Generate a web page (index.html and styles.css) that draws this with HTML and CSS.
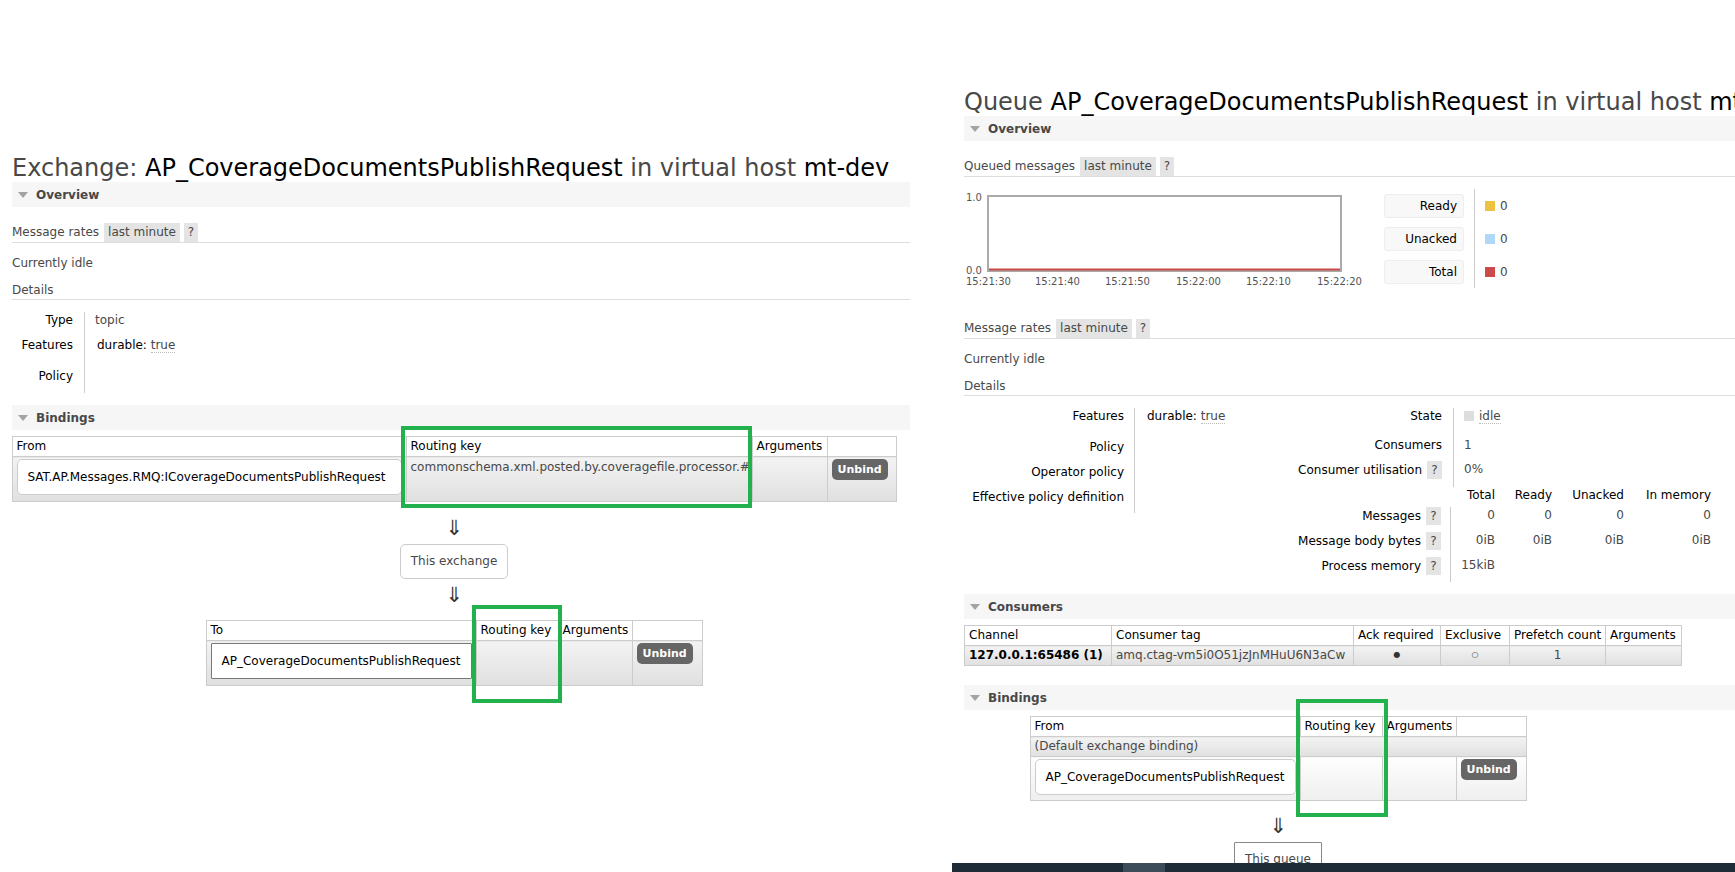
FILE: index.html
```html
<!DOCTYPE html>
<html>
<head>
<meta charset="utf-8">
<title>RabbitMQ bindings</title>
<link rel="stylesheet" href="styles.css">
</head>
<body>
<div class="page">
  <section class="panel left">
    <h1><span>Exchange: </span><b>AP_CoverageDocumentsPublishRequest</b><span> in virtual host </span><b>mt-dev</b></h1>
    <div class="bar"><span class="tri"></span>Overview</div>
    <div class="rate-row">Message rates<span class="chip">last minute</span><span class="chip q">?</span></div>
    <div class="idle">Currently idle</div>
    <div class="details">Details</div>
    <div class="facts ex-facts">
      <div class="fr h25"><div class="fl">Type</div><div class="fv">topic</div></div>
      <div class="fr h31"><div class="fl">Features</div><div class="fv"><span class="dk">durable:</span> <span class="abbr">true</span></div></div>
      <div class="fr h25"><div class="fl">Policy</div><div class="fv"></div></div>
    </div>
    <div class="bar mt12"><span class="tri"></span>Bindings</div>
    <div class="bwrap lwrap">
      <table class="list t1">
        <colgroup><col style="width:394px"><col style="width:346px"><col style="width:75px"><col style="width:69px"></colgroup>
        <tr class="hd"><th>From</th><th>Routing key</th><th>Arguments</th><th></th></tr>
        <tr class="bd"><td><span class="objbox">SAT.AP.Messages.RMQ:ICoverageDocumentsPublishRequest</span></td><td>commonschema.xml.posted.by.coveragefile.processor.#</td><td></td><td><span class="btn">Unbind</span></td></tr>
      </table>
      <div class="arrow">⇓</div>
      <div class="node">This exchange</div>
      <div class="arrow">⇓</div>
      <table class="list t2">
        <colgroup><col style="width:270px"><col style="width:82px"><col style="width:74px"><col style="width:70px"></colgroup>
        <tr class="hd"><th>To</th><th>Routing key</th><th>Arguments</th><th></th></tr>
        <tr class="bd"><td><span class="objbox dark">AP_CoverageDocumentsPublishRequest</span></td><td></td><td></td><td><span class="btn">Unbind</span></td></tr>
      </table>
      <div class="mark m1"></div>
      <div class="mark m2"></div>
    </div>
  </section>

  <section class="panel right">
    <div class="rcontent">
      <h1><span>Queue </span><b>AP_CoverageDocumentsPublishRequest</b><span> in virtual host </span><b>mt-dev</b></h1>
      <div class="bar"><span class="tri"></span>Overview</div>
      <div class="rate-row">Queued messages<span class="chip">last minute</span><span class="chip q">?</span></div>
      <div class="chart-row">
        <svg class="chart" width="412" height="100" viewBox="0 0 412 100">
          <rect x="24" y="7" width="353" height="75" fill="#fff" stroke="#aaa" stroke-width="2"/>
          <line x1="25" y1="80.5" x2="376" y2="80.5" stroke="#cb4b4b" stroke-width="2"/>
          <g font-family="DejaVu Sans, sans-serif" font-size="10" fill="#545454">
            <text x="2" y="12">1.0</text>
            <text x="2" y="85">0.0</text>
            <text x="2" y="95.5">15:21:30</text>
            <text x="71" y="95.5">15:21:40</text>
            <text x="141" y="95.5">15:21:50</text>
            <text x="212" y="95.5">15:22:00</text>
            <text x="282" y="95.5">15:22:10</text>
            <text x="353" y="95.5">15:22:20</text>
          </g>
        </svg>
        <div class="legend">
          <div class="lg-row"><div class="lg-l"><div class="lg-box">Ready</div></div><div class="lg-v"><span class="sw ready"></span>0</div></div>
          <div class="lg-row"><div class="lg-l"><div class="lg-box">Unacked</div></div><div class="lg-v"><span class="sw unacked"></span>0</div></div>
          <div class="lg-row"><div class="lg-l"><div class="lg-box">Total</div></div><div class="lg-v"><span class="sw total"></span>0</div></div>
        </div>
      </div>
      <div class="rate-row mt30">Message rates<span class="chip">last minute</span><span class="chip q">?</span></div>
      <div class="idle">Currently idle</div>
      <div class="details">Details</div>
      <div class="qdetails">
        <div class="facts qfacts">
          <div class="fr h31"><div class="fl">Features</div><div class="fv"><span class="dk">durable:</span> <span class="abbr">true</span></div></div>
          <div class="fr h25"><div class="fl">Policy</div><div class="fv"></div></div>
          <div class="fr h25"><div class="fl">Operator policy</div><div class="fv"></div></div>
          <div class="fr h24"><div class="fl">Effective policy definition</div><div class="fv"></div></div>
        </div>
        <div class="rblock">
          <div class="facts sfacts">
            <div class="fr h29"><div class="fl">State</div><div class="fv"><span class="state"></span><span class="abbr">idle</span></div></div>
            <div class="fr h24"><div class="fl">Consumers</div><div class="fv">1</div></div>
            <div class="fr h26"><div class="fl">Consumer utilisation<span class="help">?</span></div><div class="fv">0%</div></div>
          </div>
          <div class="stats">
            <div class="sr hdr"><div class="sl"></div><div class="c1">Total</div><div class="c2">Ready</div><div class="c3">Unacked</div><div class="c4">In memory</div><div class="c5">Persistent</div></div>
            <div class="sr"><div class="sl">Messages<span class="help">?</span></div><div class="c1">0</div><div class="c2">0</div><div class="c3">0</div><div class="c4">0</div><div class="c5">0</div></div>
            <div class="sr"><div class="sl">Message body bytes<span class="help">?</span></div><div class="c1">0iB</div><div class="c2">0iB</div><div class="c3">0iB</div><div class="c4">0iB</div><div class="c5">0iB</div></div>
            <div class="sr"><div class="sl">Process memory<span class="help">?</span></div><div class="c1">15kiB</div><div class="c2"></div><div class="c3"></div><div class="c4"></div><div class="c5"></div></div>
          </div>
        </div>
      </div>
      <div class="bar mt12"><span class="tri"></span>Consumers</div>
      <table class="list t3">
        <colgroup><col style="width:147px"><col style="width:242px"><col style="width:87px"><col style="width:69px"><col style="width:96px"><col style="width:76px"></colgroup>
        <tr class="hd"><th>Channel</th><th>Consumer tag</th><th>Ack required</th><th>Exclusive</th><th>Prefetch count</th><th>Arguments</th></tr>
        <tr class="bd sm"><td class="ch">127.0.0.1:65486 (1)</td><td>amq.ctag-vm5i0O51jzJnMHuU6N3aCw</td><td class="ctr dot">●</td><td class="ctr dot">○</td><td class="ctr">1</td><td></td></tr>
      </table>
      <div class="bar mt19"><span class="tri"></span>Bindings</div>
      <div class="bwrap rwrap">
        <table class="list t4">
          <colgroup><col style="width:270px"><col style="width:82px"><col style="width:74px"><col style="width:70px"></colgroup>
          <tr class="hd"><th>From</th><th>Routing key</th><th>Arguments</th><th></th></tr>
          <tr class="bd sm"><td colspan="4" class="dflt">(Default exchange binding)</td></tr>
          <tr class="bd alt"><td><span class="objbox">AP_CoverageDocumentsPublishRequest</span></td><td></td><td></td><td><span class="btn">Unbind</span></td></tr>
        </table>
        <div class="arrow">⇓</div>
        <div class="node qnode">This queue</div>
        <div class="mark m3"></div>
      </div>
    </div>
    <div class="hscroll"><div class="thumb"></div></div>
  </section>
</div>
</body>
</html>
```
FILE: styles.css
```css
* { box-sizing: border-box; }
html, body { margin: 0; padding: 0; }
body {
  font-family: "DejaVu Sans", Verdana, sans-serif;
  font-size: 12px;
  color: #484848;
  background: #fff;
  width: 1735px;
  height: 872px;
  overflow: hidden;
}
.page { display: flex; height: 872px; }
.panel { flex: none; height: 872px; }
.left { width: 952px; padding: 155px 0 0 12px; }
.left > * { width: 898px; }
.right { width: 783px; display: flex; flex-direction: column; overflow: hidden; }
.rcontent { height: 863px; overflow: hidden; padding: 89px 0 0 12px; width: 783px; }
.rcontent > * { width: 900px; }

h1 {
  font-size: 24px;
  line-height: 27px;
  font-weight: normal;
  margin: 0;
  white-space: nowrap;
  color: #484848;
}
h1 b { font-weight: normal; color: #000; }

.bar {
  height: 25px;
  background: #f6f6f6;
  display: flex;
  align-items: center;
  padding-left: 6px;
  font-weight: bold;
  color: #484848;
  line-height: 16px;
}
.tri {
  width: 0; height: 0;
  border-left: 5.5px solid transparent;
  border-right: 5.5px solid transparent;
  border-top: 6px solid #a3a3a3;
  margin-right: 8px;
}
.mt12 { margin-top: 12px; }
.mt19 { margin-top: 19px; }
.mt30 { margin-top: 30px !important; }

.rate-row {
  margin-top: 16px;
  height: 20px;
  line-height: 19px;
  border-bottom: 1px solid #ddd;
  display: flex;
  align-items: flex-start;
  white-space: nowrap;
}
.chip {
  display: inline-block;
  height: 19px;
  background: #e4e4e4;
  padding: 0 4px;
  margin-left: 5px;
}
.chip.q { width: 14px; padding: 0; text-align: center; margin-left: 4px; }

.idle { margin-top: 10px; line-height: 20px; height: 20px; }
.details {
  margin-top: 7px;
  height: 20px;
  line-height: 20px;
  border-bottom: 1px solid #ddd;
}

.facts { margin-top: 12px; }
.fr { display: flex; line-height: 16px; white-space: nowrap; }
.h24 { height: 24px; } .h25 { height: 25px; } .h26 { height: 26px; }
.h29 { height: 29px; } .h31 { height: 31px; }
.fl {
  flex: none;
  text-align: right;
  color: #000;
  border-right: 1px solid #ccc;
}
.fv { padding-left: 10px; }
.ex-facts .fl { width: 73px; padding-right: 11px; }
.qfacts .fl { width: 171px; padding-right: 10px; }
.dk { color: #000; margin-left: 2px; }
.abbr { border-bottom: 1px dotted #bbb; }

.bwrap { position: relative; display: flex; flex-direction: column; align-items: center; margin-top: 6px; }
.lwrap { width: 884px !important; }
.rwrap { width: 628px !important; }

table.list { border-collapse: collapse; table-layout: fixed; }
table.list th, table.list td {
  border: 1px solid #ccc;
  padding: 0 4px;
  text-align: left;
  vertical-align: top;
  white-space: nowrap;
  overflow: hidden;
}
table.list th { font-weight: normal; color: #000; line-height: 18px; background: #fff; }
table.list tr.hd { height: 20px; }
table.list tr.bd { height: 45px; }
table.list tr.bd td {
  padding-top: 2px;
  line-height: 16px;
  background: linear-gradient(#f3f3f3, #e0e0e0);
}
table.list tr.bd.sm { height: 20px; }
table.list tr.bd.sm td { padding-top: 0; line-height: 18px; }
table.list tr.bd.alt { height: 44px; }
table.list tr.bd.alt td { background: linear-gradient(#fefefe, #efefef); }
.t1 { width: 884px; }
.t2 { width: 496px; }
.t3 { width: 717px; margin-top: 6px; }
.t4 { width: 496px; }
td.ch { font-weight: bold; color: #000; }
td.ctr { text-align: center !important; }
td.dot { font-size: 8px; color: #333; }

.objbox {
  display: block;
  border: 1px solid #ccc;
  border-radius: 5px;
  background: #fff;
  padding: 9px 10px;
  line-height: 16px;
  color: #000;
  white-space: nowrap;
  overflow: hidden;
}
.objbox.dark { border-color: #777; border-radius: 1px; }

.btn {
  display: inline-block;
  background: #666;
  color: #fff;
  font-weight: bold;
  font-size: 11px;
  line-height: 21px;
  padding: 0 6px;
  border-radius: 5px;
}

.arrow {
  height: 32px;
  line-height: 32px;
  font-size: 21px;
  text-align: center;
  color: #333;
  margin-top: 10px;
}
.arrow + .node + .arrow { margin-top: 0; margin-bottom: 9px; }
.rwrap .arrow { margin-top: 9px; }
.node {
  border: 1px solid #ccc;
  border-radius: 5px;
  padding: 9px 10px;
  line-height: 15px;
  background: #fff;
}
.qnode { border-color: #888; border-radius: 1px; }

.mark { position: absolute; border: 4px solid #22b14c; }
.m1 { left: 389px; top: -10px; width: 351px; height: 82px; }
.m2 { left: 460px; top: 169px; width: 90px; height: 98px; }
.m3 { left: 332px; top: -17px; width: 92px; height: 118px; }

.chart-row { display: flex; margin-top: 12px; height: 100px; }
.chart { display: block; flex: none; }
.legend { margin-left: 8px; }
.lg-row { display: flex; height: 33px; }
.lg-l { width: 91px; padding: 5px 10px 0 0; border-right: 1px solid #ccc; }
.lg-box {
  height: 24px;
  background: #f8f8f8;
  border: 1px solid #eee;
  border-radius: 3px;
  text-align: right;
  padding-right: 6px;
  line-height: 22px;
  color: #000;
}
.lg-v { padding: 5px 0 0 10px; display: flex; align-items: center; height: 29px; }
.sw { width: 10px; height: 10px; margin-right: 5px; }
.sw.ready { background: #edc240; }
.sw.unacked { background: #afd8f8; }
.sw.total { background: #cb4b4b; }

.qdetails { display: flex; margin-top: 12px; height: 174px; }
.qdetails .facts { margin-top: 0; }
.qfacts { width: 316px; flex: none; }
.rblock { flex: none; }
.sfacts .fl { width: 174px; padding-right: 11px; }
.state { display: inline-block; width: 10px; height: 10px; background: #ddd; margin-right: 5px; vertical-align: -1px; }
.help {
  display: inline-block;
  width: 15px;
  height: 18px;
  line-height: 18px;
  text-align: center;
  background: #e4e4e4;
  margin-left: 5px;
  vertical-align: middle;
  color: #484848;
}
.stats { white-space: nowrap; }
.sr { display: flex; height: 25px; line-height: 16px; }
.sr.hdr { height: 20px; color: #000; }
.sl { width: 171px; flex: none; text-align: right; padding-right: 9px; border-right: 1px solid #ccc; color: #000; }
.sr.hdr .sl { border-right-color: transparent; }
.sr > div:not(.sl) { flex: none; text-align: right; padding-right: 5px; }
.c1 { width: 49px; } .c2 { width: 57px; } .c3 { width: 72px; } .c4 { width: 87px; } .c5 { width: 87px; }

.hscroll { height: 9px; background: #1e2c37; display: flex; }
.thumb { margin-left: 171px; width: 42px; background: #3c4c58; }
```
